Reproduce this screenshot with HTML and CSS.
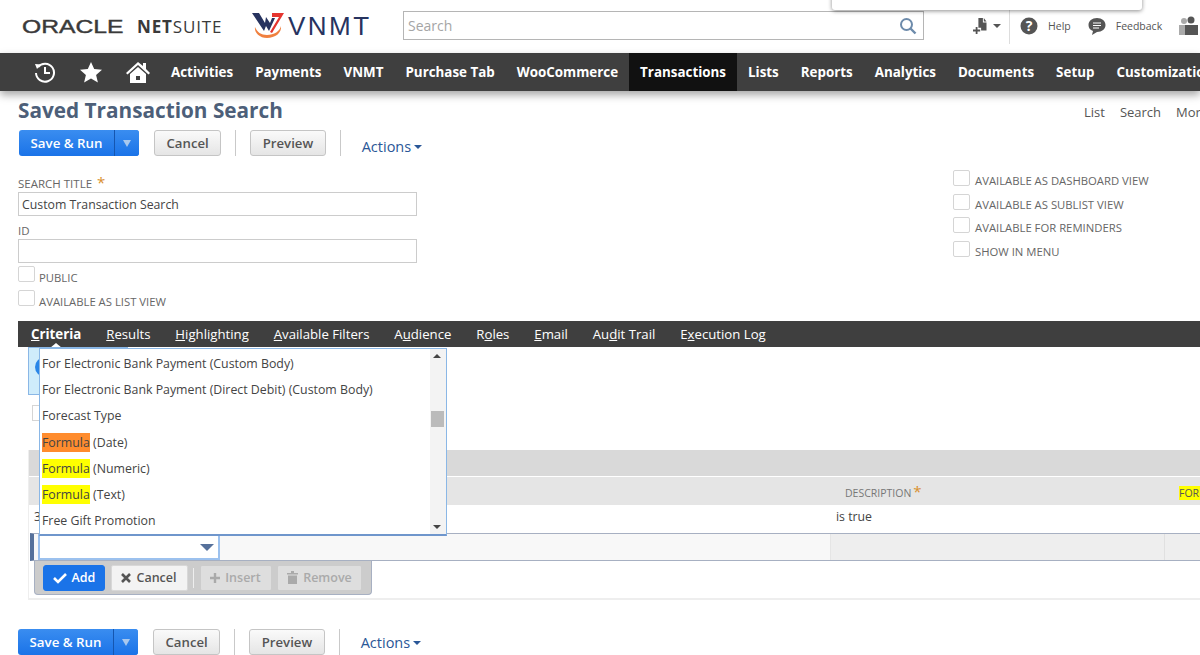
FILE: index.html
```html
<!DOCTYPE html>
<html lang="en">
<head>
<meta charset="utf-8">
<title>Saved Transaction Search</title>
<link rel="stylesheet" href="styles.css">
</head>
<body>
<div class="page">
  <div class="popup-edge"></div>
  <header class="top">
    <div class="brand"><span class="oracle">ORACLE</span><span class="netsuite"><b>NET</b>SUITE</span></div>
    <div class="vnmt">
      <svg class="vnmt-mark" width="32" height="27" viewBox="0 0 32 27"><path d="M0 1h7l6 10 1-6 4 6 2-5h3l-6 13-3-5-2 5z" fill="#27335f"/><path d="M20 1h12L20 21l-2-1 9-15h-7z" fill="#e5352f"/><path d="M3 15c-1 6 5 11 12 11 8 0 15-5 14-12-1 5-7 9-14 9-6 0-10-3-12-8z" fill="#f0803f"/></svg>
      <span class="vnmt-text">VNMT</span>
    </div>
    <div class="search"><span class="search-hint">Search</span>
      <svg width="18" height="18" viewBox="0 0 18 18"><circle cx="7.5" cy="7.5" r="5.5" fill="none" stroke="#6d8bab" stroke-width="2"/><path d="M11.5 11.5l5 5" stroke="#6d8bab" stroke-width="2.4"/></svg>
    </div>
    <div class="tools">
      <div class="tool-create">
        <svg width="18" height="20" viewBox="0 0 20 20"><path d="M6 1h5v5h4v9H9v-3H6z" fill="#555"/><path d="M12 1l3 4h-3z" fill="#555"/><path d="M3 11h2v3h3v2H5v3H3v-3H0v-2h3z" fill="#555"/></svg>
        <i class="caret-small"></i>
      </div>
      <div class="tool-links">
        <svg width="18" height="18" viewBox="0 0 18 18"><circle cx="9" cy="9" r="8.5" fill="#555"/><text x="9" y="13.5" class="help-mark">?</text></svg>
        <span class="tool-label help">Help</span>
        <svg width="18" height="18" viewBox="0 0 18 18"><path d="M9 1c5 0 8.500 3 8.500 7s-3.500 7-8.500 7l-5 3 1-4C2 13 .5 11 .5 8 .5 4 4 1 9 1z" fill="#555"/><path d="M5 6h8M5 8.500h8M5 11h6" stroke="#fff" stroke-width="1.100"/></svg>
        <span class="tool-label">Feedback</span>
        <svg width="22" height="20" viewBox="0 0 22 20"><circle cx="6" cy="5" r="3" fill="#aaa"/><path d="M1 9h8v10H1z" fill="#aaa"/><circle cx="13" cy="4" r="3.500" fill="#555"/><path d="M7 9h13v10H7z" fill="#555"/></svg>
      </div>
    </div>
  </header>

  <nav class="nav">
    <div class="nav-icons">
      <svg width="22" height="22" viewBox="0 0 22 22"><path d="M4 6a9 9 0 1 1-2 6" fill="none" stroke="#fff" stroke-width="2"/><path d="M1 3l6 .5L3 8z" fill="#fff"/><path d="M11 6v6h5" fill="none" stroke="#fff" stroke-width="2"/></svg>
      <svg width="22" height="21" viewBox="0 0 22 21"><path d="M11 0l3.200 7 7.800.8-5.900 5.100 1.800 7.600L11 16.500 4.100 20.500l1.800-7.600L0 7.800 7.800 7z" fill="#fff"/></svg>
      <svg width="24" height="22" viewBox="0 0 24 22"><path d="M12 1l5 4V2h3v6l4 4-1.500 1.500L12 4 1.500 13.500 0 12z" fill="#fff"/><path d="M4 13l8-7 8 7v9H4zm6 2v4h4v-4z" fill="#fff" fill-rule="evenodd"/></svg>
    </div>
    <a class="nav-item">Activities</a>
    <a class="nav-item">Payments</a>
    <a class="nav-item">VNMT</a>
    <a class="nav-item">Purchase Tab</a>
    <a class="nav-item">WooCommerce</a>
    <a class="nav-item active">Transactions</a>
    <a class="nav-item">Lists</a>
    <a class="nav-item">Reports</a>
    <a class="nav-item">Analytics</a>
    <a class="nav-item">Documents</a>
    <a class="nav-item">Setup</a>
    <a class="nav-item">Customization</a>
  </nav>

  <div class="title-row">
    <h1>Saved Transaction Search</h1>
    <div class="page-links"><span>List</span><span>Search</span><span>More</span></div>
  </div>

  <div class="actions first">
    <div class="btn-split"><span class="btn-main">Save &amp; Run</span><span class="btn-arrow"></span></div>
    <span class="btn">Cancel</span>
    <span class="sep"></span>
    <span class="btn">Preview</span>
    <span class="sep"></span>
    <span class="actions-link">Actions<i class="caret-blue"></i></span>
  </div>

  <section class="form">
    <div class="form-left">
      <label class="lbl">SEARCH TITLE <em class="star">*</em></label>
      <div class="input">Custom Transaction Search</div>
      <label class="lbl lbl-id">ID</label>
      <div class="input"></div>
      <div class="check first-check"><i></i><span>PUBLIC</span></div>
      <div class="check"><i></i><span>AVAILABLE AS LIST VIEW</span></div>
    </div>
    <div class="form-right">
      <div class="check"><i></i><span>AVAILABLE AS DASHBOARD VIEW</span></div>
      <div class="check"><i></i><span>AVAILABLE AS SUBLIST VIEW</span></div>
      <div class="check"><i></i><span>AVAILABLE FOR REMINDERS</span></div>
      <div class="check"><i></i><span>SHOW IN MENU</span></div>
    </div>
  </section>

  <div class="tabs">
    <span class="tab current"><u>C</u>riteria</span>
    <span class="tab"><u>R</u>esults</span>
    <span class="tab"><u>H</u>ighlighting</span>
    <span class="tab"><u>A</u>vailable Filters</span>
    <span class="tab">A<u>u</u>dience</span>
    <span class="tab">R<u>o</u>les</span>
    <span class="tab"><u>E</u>mail</span>
    <span class="tab">Au<u>d</u>it Trail</span>
    <span class="tab">E<u>x</u>ecution Log</span>
  </div>

  <section class="panel">
    <div class="info"><i class="info-dot"></i></div>
    <div class="use-box"></div>
    <div class="table">
      <div class="band"></div>
      <div class="head"><span class="h-desc">DESCRIPTION<em class="star">*</em></span><span class="h-form">FORMULA</span></div>
      <div class="row"><span class="r-no">3</span><span class="r-desc">is true</span></div>
      <div class="edit">
        <div class="cell-select"><i class="select-caret"></i></div>
        <div class="cell-a"></div><div class="cell-b"></div><div class="cell-c"></div>
      </div>
      <div class="edit-actions">
        <span class="mini primary"><svg width="14" height="12" viewBox="0 0 14 12"><path d="M1 6l4 4 8-8" fill="none" stroke="#fff" stroke-width="2.600"/></svg>Add</span>
        <span class="mini m-cancel"><svg width="10" height="10" viewBox="0 0 10 10"><path d="M1 1l8 8M9 1l-8 8" stroke="#555" stroke-width="2.600"/></svg>Cancel</span>
        <span class="mini-sep"></span>
        <span class="mini off m-insert"><svg width="10" height="10" viewBox="0 0 10 10"><path d="M5 0v10M0 5h10" stroke="#aaa" stroke-width="2.400"/></svg>Insert</span>
        <span class="mini off m-remove"><svg width="11" height="13" viewBox="0 0 11 13"><path d="M0 2h11v1.500H0zM4 0h3v2H4zM1 4.500h9V13H1z" fill="#aaa"/></svg>Remove</span>
      </div>
    </div>

    <div class="dropdown">
      <ul>
        <li>For Electronic Bank Payment (Custom Body)</li>
        <li>For Electronic Bank Payment (Direct Debit) (Custom Body)</li>
        <li>Forecast Type</li>
        <li><mark class="orange">Formula</mark> (Date)</li>
        <li><mark>Formula</mark> (Numeric)</li>
        <li><mark>Formula</mark> (Text)</li>
        <li>Free Gift Promotion</li>
      </ul>
      <div class="scroll"><i class="up"></i><i class="thumb"></i><i class="down"></i></div>
    </div>
  </section>

  <div class="actions last">
    <div class="btn-split"><span class="btn-main">Save &amp; Run</span><span class="btn-arrow"></span></div>
    <span class="btn">Cancel</span>
    <span class="sep"></span>
    <span class="btn">Preview</span>
    <span class="sep"></span>
    <span class="actions-link">Actions<i class="caret-blue"></i></span>
  </div>
</div>
</body>
</html>
```
FILE: styles.css
```css
* { box-sizing: border-box; }
html, body { margin: 0; padding: 0; background: #fff; }
body { font-family: "Open Sans", "Liberation Sans", sans-serif; color: #444; overflow: hidden; }
.page { position: relative; width: 1200px; height: 655px; overflow: hidden; }

.popup-edge { position: absolute; left: 832px; top: -10px; width: 310px; height: 20px; background: #fff; border-radius: 3px; box-shadow: 0 1px 4px rgba(0,0,0,.45); z-index: 3; }

.top { height: 53px; display: flex; align-items: center; }
.brand { flex: none; margin-left: 22px; width: 201px; display: flex; align-items: baseline; color: #3a3a3a; white-space: nowrap; }
.oracle { font-family: "Liberation Sans", sans-serif; font-size: 18px; transform: scaleX(1.37); transform-origin: left; width: 115px; -webkit-text-stroke: .4px #3a3a3a; }
.netsuite { font-family: "Open Sans", sans-serif; font-size: 17px; letter-spacing: .85px; }
.netsuite b { font-weight: 700; }
.vnmt { flex: none; width: 151px; margin-left: 29px; display: flex; align-items: center; gap: 4px; margin-bottom: 2px; }
.vnmt-mark { flex: none; }
.vnmt-text { font-family: "Liberation Sans", sans-serif; font-size: 26px; letter-spacing: 2.500px; color: #27335f; line-height: 1; }
.search { flex: none; width: 521px; height: 29px; border: 1px solid #b5b5b5; display: flex; align-items: center; justify-content: space-between; padding: 0 6px 0 4px; margin-bottom: 2px; }
.search-hint { font-size: 14px; color: #a5a5a5; }
.tools { flex: none; display: flex; align-items: center; margin-left: 49px; height: 35px; margin-bottom: 1px; }
.tool-create { display: flex; align-items: center; gap: 2px; width: 37px; height: 100%; border-right: 1px solid #ddd; }
.caret-small { width: 0; height: 0; border: 4px solid transparent; border-top: 4px solid #555; border-bottom: 0; }
.tool-links { display: flex; align-items: center; margin-left: 10px; }
.help-mark { font-family: "Open Sans", sans-serif; font-size: 14px; font-weight: 700; text-anchor: middle; fill: #fff; }
.tool-label { font-size: 10.500px; color: #555; margin: 0 16px 0 10px; }
.tool-label.help { margin-right: 17px; }

.nav { height: 38px; background: #3f3f3f; display: flex; align-items: stretch; box-shadow: 0 4px 8px rgba(0,0,0,.35); white-space: nowrap; position: relative; }
.nav-icons { flex: none; display: flex; align-items: center; gap: 24px; padding-left: 34px; width: 160px; }
.nav-item { flex: none; display: flex; align-items: center; padding: 0 11px; font-size: 13.380px; font-weight: 700; color: #fff; }
.nav-item.active { background: #111; }

.title-row { display: flex; justify-content: space-between; align-items: center; height: 39px; padding: 0 0 2px 18px; }
h1 { margin: 0; font-size: 20.750px; font-weight: 700; color: #4d5f79; line-height: 30px; }
.page-links { flex: none; display: flex; gap: 15px; font-size: 13px; color: #555; width: 116px; white-space: nowrap; margin-top: 4px; }

.actions { display: flex; align-items: center; height: 26px; padding-left: 19px; margin-bottom: 1px; }
.btn-split { flex: none; display: flex; width: 120px; height: 26px; border-radius: 3px; background: linear-gradient(#3a8df0, #1a73e8); color: #fff; font-size: 13.300px; font-weight: 600; overflow: hidden; }
.btn-main { flex: 1; display: flex; align-items: center; justify-content: center; border-right: 1px solid #1556b0; }
.btn-arrow { width: 24px; position: relative; background: linear-gradient(#3a8df0, #1a73e8); }
.btn-arrow::after { content: ""; position: absolute; left: 8px; top: 10px; border: 4.500px solid transparent; border-top: 7px solid #a8c8ee; border-bottom: 0; }
.btn { flex: none; height: 26px; padding: 0 11.500px; margin-left: 15px; display: flex; align-items: center; font-size: 13.200px; font-weight: 600; color: #555; border: 1px solid #c5c5c5; border-radius: 3px; background: linear-gradient(#fafafa, #e5e5e5); }
.sep { flex: none; width: 1px; height: 26px; background: #c9c9c9; margin-left: 14px; }
.sep + .btn { margin-left: 14px; }
.actions-link { margin-left: 21px; font-size: 14.500px; font-weight: 400; color: #2a5797; display: flex; align-items: center; gap: 3px; margin-top: 6px; }
.last .actions-link { margin-top: 0; }
.caret-blue { width: 0; height: 0; border: 4px solid transparent; border-top: 4px solid #2a5797; border-bottom: 0; margin-top: 2px; }

.form { display: flex; height: 164px; padding: 0 0 0 18px; }
.form-left { flex: none; width: 399px; padding-top: 19px; }
.form-left .check { gap: 4px; }
.form-right { margin-left: 536px; padding-top: 13px; }
.form-right .check span { margin-top: 3px; }
.lbl { display: block; font-size: 11.500px; color: #666; line-height: 16px; height: 16px; white-space: nowrap; }
.lbl .star { margin-left: 2px; }
.lbl-id { margin-top: 7px; }
.star { color: #d9902f; font-style: normal; font-size: 15px; line-height: 10px; }
.input { height: 24px; border: 1px solid #ccc; font-size: 12.300px; color: #444; padding: 4px 3px 2px; line-height: 16px; }
.check { display: flex; align-items: flex-start; gap: 5px; height: 23.500px; font-size: 11.300px; color: #666; white-space: nowrap; }
.check i { width: 17px; height: 16px; border: 1px solid #d5d5d5; border-radius: 2px; flex: none; background: #fff; }
.check span { margin-top: 4px; }
.first-check { margin-top: 3px; }

.tabs { height: 26px; background: #3f3f3f; margin-left: 18px; display: flex; align-items: center; padding-left: 13px; gap: 24.900px; white-space: nowrap; position: relative; }
.tab { font-size: 13.200px; color: #fff; }
.tab.current { font-weight: 700; position: relative; font-size: 13.300px; }
.tab.current::after { content: ""; position: absolute; left: 50%; margin-left: -6px; bottom: -5px; border: 6px solid transparent; border-bottom: 5px solid #fff; border-top: 0; }

.panel { position: relative; height: 282px; padding-left: 28px; }
.info { width: 100px; height: 48px; background: #cfecfb; border: 1px solid #8ab7e6; position: relative; }
.info-dot { position: absolute; left: 6px; top: 9px; width: 20px; height: 20px; background: #2a86e8; border-radius: 50%; }
.use-box { width: 17px; height: 16px; border: 1px solid #d5d5d5; margin: 10px 0 0 4px; }
.table { margin-top: 29px; border-bottom: 2px solid #eee; border-left: 1px solid #eee; height: 150px; }
.band { height: 26px; background: #d9d9d9; }
.head { height: 28px; background: #e5e5e5; margin-top: 1px; position: relative; font-size: 10.500px; color: #777; }
.h-desc { position: absolute; left: 816px; top: 9px; white-space: nowrap; }
.h-desc .star { margin-left: 2px; }
.h-form { position: absolute; left: 1150px; top: 9px; background: #ff0; color: #555; white-space: nowrap; }
.row { height: 28px; position: relative; font-size: 12.300px; color: #444; line-height: 24px; }
.r-no { position: absolute; left: 5px; }
.r-desc { position: absolute; left: 807px; }
.edit { height: 28px; display: flex; border-top: 1px solid #a7b0c2; border-bottom: 1px solid #a7b0c2; border-left: 4px solid #56719b; background: #f8f8f8; margin-left: 1px; }
.cell-select { flex: none; width: 182px; margin-left: 4px; height: 26px; background: #fff; border: 2px solid #9cc1ee; position: relative; }
.select-caret { position: absolute; right: 4px; top: 8px; border: 7px solid transparent; border-top: 7px solid #56719b; border-bottom: 0; }
.cell-a { flex: none; width: 610px; }
.cell-b { flex: none; width: 334px; background: #eee; border-left: 1px solid #e5e5e5; }
.cell-c { flex: 1; background: #eee; border-left: 1px solid #e0e0e0; }
.edit-actions { display: flex; align-items: center; gap: 5.500px; margin: 0 0 0 5px; height: 34px; padding: 0 8px; background: #ccc; border: 1px solid #a7b0c2; border-top: 0; border-radius: 0 0 4px 4px; width: 338px; }
.mini { flex: none; display: flex; align-items: center; justify-content: center; gap: 5px; height: 26px; font-size: 12.500px; font-weight: 600; color: #555; background: #f3f3f3; border: 1px solid #d8d8d8; border-radius: 2px; white-space: nowrap; }
.mini.primary { width: 62px; background: #1a73e8; color: #fff; border-color: #1a73e8; border-radius: 3px; }
.m-cancel { width: 77px; }
.m-insert { width: 72px; }
.m-remove { width: 85px; }
.mini.off { color: #aaa; background: #dedede; border-color: #ccc; }
.mini-sep { flex: none; width: 1px; height: 20px; background: #eee; }

.dropdown { position: absolute; left: 39px; top: 1px; width: 408px; height: 188px; background: #fff; border: 1px solid #8ab7e6; border-bottom: 2px solid #6f96cc; display: flex; z-index: 2; }
.dropdown ul { list-style: none; margin: 0; padding: 2px 0 0; flex: 1; }
.dropdown li { height: 26.200px; line-height: 26.200px; padding-left: 2px; font-size: 12.350px; color: #444; white-space: nowrap; }
mark { background: #ff0; color: #444; padding: 1px 0; }
mark.orange { background: #ff8c2e; }
.scroll { flex: none; width: 16px; background: #f3f3f3; position: relative; }
.up, .down { position: absolute; left: 3px; border: 4px solid transparent; }
.up { top: 5px; border-bottom: 4px solid #444; border-top: 0; }
.down { bottom: 5px; border-top: 4px solid #444; border-bottom: 0; }
.thumb { position: absolute; left: 1px; top: 62px; width: 13px; height: 16px; background: #bbb; }

.last { padding-left: 18px; }
```
